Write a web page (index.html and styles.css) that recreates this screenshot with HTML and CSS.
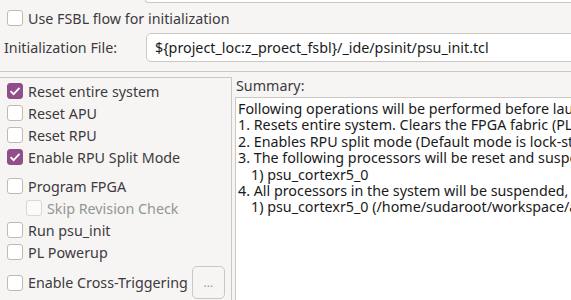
FILE: index.html
```html
<!DOCTYPE html>
<html lang="en">
<head>
  <meta charset="UTF-8" />
  <title>Target Setup</title>
  <link rel="stylesheet" href="styles.css">
</head>
<body>
<div class="page">
  <!-- bottom of the field above, scrolled off -->
  <div class="prev-field"></div>

  <label class="check fsbl"><span class="box"></span>Use FSBL flow for initialization</label>

  <div class="file-row">
    <span class="file-label">Initialization File:</span>
    <div class="input">${project_loc:z_proect_fsbl}/_ide/psinit/psu_init.tcl</div>
  </div>

  <div class="main">
    <div class="options">
      <label class="check on"><span class="box"></span>Reset entire system</label>
      <label class="check"><span class="box"></span>Reset APU</label>
      <label class="check"><span class="box"></span>Reset RPU</label>
      <label class="check on"><span class="box"></span>Enable RPU Split Mode</label>
      <label class="check gap"><span class="box"></span>Program FPGA</label>
      <label class="check sub off"><span class="box"></span>Skip Revision Check</label>
      <label class="check"><span class="box"></span>Run psu_init</label>
      <label class="check"><span class="box"></span>PL Powerup</label>
      <div class="cross-row">
        <label class="check"><span class="box"></span>Enable Cross-Triggering</label>
        <button class="dots">...</button>
      </div>
    </div>

    <div class="summary">
      <div class="summary-label">Summary:</div>
      <div class="summary-text">
        <div>Following operations will be performed before launching the debugger.</div>
        <div>1. Resets entire system. Clears the FPGA fabric (PL).</div>
        <div>2. Enables RPU split mode (Default mode is lock-step).</div>
        <div>3. The following processors will be reset and suspended.</div>
        <div class="indent">1) psu_cortexr5_0</div>
        <div>4. All processors in the system will be suspended, and Applications will be downloaded to the following processors.</div>
        <div class="indent">1) psu_cortexr5_0 (/home/sudaroot/workspace/app/Debug/app.elf)</div>
      </div>
    </div>
  </div>
</div>
</body>
</html>
```

FILE: styles.css
```css
body {
  margin: 0;
  background: #f6f5f4;
  font-family: 'Noto Sans', 'Open Sans', sans-serif;
  font-size: 14.3px;
  color: #3d3a40;
}

.page {
  width: 571px;
  height: 300px;
  overflow: hidden;
}

/* field above, only its lower edge is visible */
.prev-field {
  height: 2px;
  margin-left: 145px;
  margin-right: -10px;
  background: #fff;
  border: 1px solid #cdc7c2;
  border-top: none;
  border-radius: 0 0 5px 5px;
}

/* checkboxes */
.check {
  display: flex;
  align-items: center;
  height: 22px;
  white-space: nowrap;
}

.check .box {
  box-sizing: border-box;
  width: 16px;
  height: 16px;
  margin-right: 5px;
  background: #fff;
  border: 1px solid #c0bab4;
  border-radius: 3px;
  flex: none;
}

.check.on .box {
  background: #924d8b url("data:image/svg+xml;utf8,<svg xmlns='http://www.w3.org/2000/svg' width='16' height='16'><path d='M3.5 8.2 L6.6 11.2 L12.5 4.8' fill='none' stroke='white' stroke-width='1.8'/></svg>") center no-repeat;
  border-color: #924d8b;
}

.check.off {
  color: #929595;
}

.check.off .box {
  background: #fafafa;
  border-color: #dad6d2;
}

.fsbl {
  margin-top: 4px;
  padding-left: 7px;
}

.file-row {
  display: flex;
  align-items: center;
  margin-top: 3px;
  height: 31px;
}

.file-label {
  flex: none;
  width: 142px;
  padding-left: 4px;
}

.input {
  flex: none;
  width: 440px;
  height: 27px;
  line-height: 27px;
  padding-left: 8px;
  background: #fff;
  border: 1px solid #cdc7c2;
  border-radius: 5px;
  color: #1a1a1a;
  white-space: nowrap;
  overflow: hidden;
}

/* lower area */
.main {
  display: flex;
  margin-top: 8px;
  border-top: 1px solid #cdc7c2;
  height: 300px;
}

.options {
  width: 224px;
  flex: none;
  margin-top: 5px;
  padding: 2px 0 0 7px;
  border-top: 1px solid #cdc7c2;
  border-right: 1px solid #cdc7c2;
}

.check.gap {
  margin-top: 7px;
}

.check.sub {
  padding-left: 19px;
}

.cross-row {
  display: flex;
  align-items: center;
  margin-top: 3px;
}

.dots {
  margin-left: 4px;
  width: 33px;
  height: 33px;
  background: #f6f5f4;
  border: 1px solid #cdc7c2;
  border-radius: 5px;
  color: #a09c98;
  font-family: inherit;
  font-size: 12px;
  padding: 0;
}

.summary {
  flex: 1;
  min-width: 0;
  padding-left: 3px;
}

.summary-label {
  height: 25px;
  line-height: 28px;
  padding-left: 1px;
}

.summary-text {
  height: 300px;
  padding: 3px 0 0 2px;
  background: #fff;
  border-top: 1px solid #cdc7c2;
  border-left: 1px solid #cdc7c2;
  color: #1a1a1a;
  line-height: 16.4px;
  white-space: nowrap;
  overflow: hidden;
}

.summary-text .indent {
  padding-left: 13px;
}
```
